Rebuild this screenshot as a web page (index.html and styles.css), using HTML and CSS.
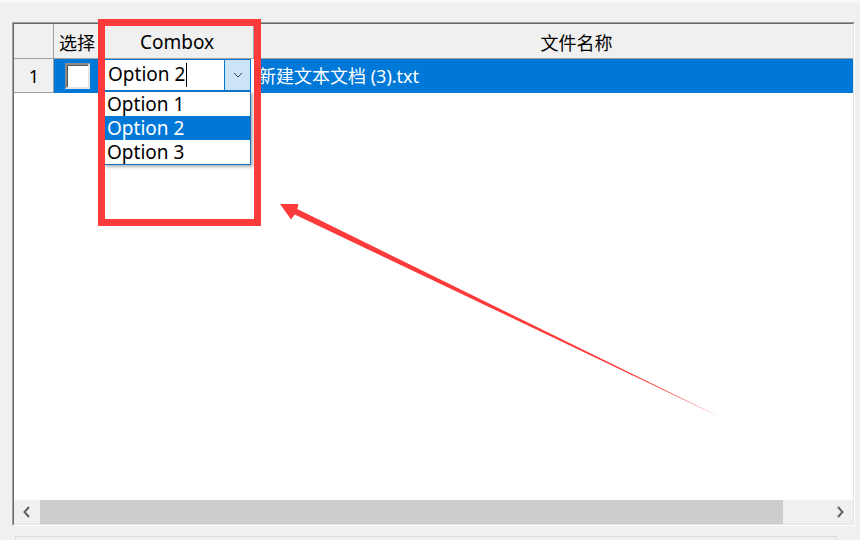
FILE: index.html
```html
<!DOCTYPE html>
<html>
<head>
<meta charset="utf-8">
<link rel="stylesheet" href="styles.css">
</head>
<body>
<div class="topstrip"></div>
<div class="grid">
  <div class="grid-inner">
    <div class="header">
      <div class="cell rowhead corner"></div>
      <div class="cell col-check hcell">选择</div>
      <div class="cell col-combo hcell latin">Combox</div>
      <div class="cell col-name hcell">文件名称</div>
    </div>
    <div class="row selected">
      <div class="cell rowhead">1</div>
      <div class="cell col-check"><span class="checkbox"></span></div>
      <div class="cell col-combo edit">
        <div class="combo">
          <div class="combo-text latin">Option 2<span class="caret"></span></div>
          <div class="combo-btn">
            <svg width="10" height="6" viewBox="0 0 10 6"><path d="M1 1 L5 5 L9 1" fill="none" stroke="#404040" stroke-width="1"/></svg>
          </div>
          <ul class="dropdown latin">
            <li>Option 1</li>
            <li class="hl">Option 2</li>
            <li>Option 3</li>
          </ul>
        </div>
      </div>
      <div class="cell col-name name">新建文本文档 (3).txt</div>
    </div>
    <div class="body-fill"></div>
    <div class="hscroll">
      <div class="sbtn">
        <svg width="10" height="12" viewBox="0 0 10 12"><path d="M7 1 L2.5 6 L7 11" fill="none" stroke="#606060" stroke-width="2"/></svg>
      </div>
      <div class="thumb"></div>
      <div class="track"></div>
      <div class="sbtn">
        <svg width="10" height="12" viewBox="0 0 10 12"><path d="M3 1 L7.5 6 L3 11" fill="none" stroke="#606060" stroke-width="2"/></svg>
      </div>
    </div>
  </div>
</div>
<div class="bottombox"></div>

<div class="highlight-rect"></div>
<svg class="arrow" width="860" height="540" viewBox="0 0 860 540">
  <polygon points="280,204 298.5,204 297.3,209.1 722,418 294.7,214.5 291,219.5" fill="#fe3b3b"/>
</svg>
</body>
</html>
```

FILE: styles.css
```css
html, body {
  margin: 0;
  padding: 0;
}
body {
  width: 860px;
  height: 540px;
  overflow: hidden;
  background: #f0f0f0;
  font-family: "Noto Sans", "Noto Sans CJK SC", sans-serif;
  font-size: 18px;
  color: #000;
  position: relative;
}
.latin {
  font-size: 19px;
}
.topstrip {
  height: 3px;
  background: #f9f9f9;
}
.grid {
  margin: 19px 0 0 12px;
  width: 843px;
  height: 504px;
  box-sizing: border-box;
  border-top: 1px solid #a0a0a0;
  border-left: 1px solid #a0a0a0;
  border-right: 1px solid #ffffff;
  border-bottom: 1px solid #ffffff;
}
.grid-inner {
  height: 100%;
  box-sizing: border-box;
  border-top: 1px solid #696969;
  border-left: 1px solid #696969;
  border-right: 1px solid #e3e3e3;
  border-bottom: 1px solid #e3e3e3;
  background: #ffffff;
  display: flex;
  flex-direction: column;
  overflow: hidden;
}
.header {
  display: flex;
  height: 35px;
  flex: none;
  background: #f0f0f0;
  border-bottom: 1px solid #a0a0a0;
  box-sizing: border-box;
}
.cell {
  flex: none;
  box-sizing: border-box;
  display: flex;
  align-items: center;
  white-space: nowrap;
  overflow: hidden;
}
.hcell {
  justify-content: center;
  border-right: 1px solid #a0a0a0;
  padding-top: 1px;
}
.rowhead {
  width: 40px;
  border-right: 1px solid #a0a0a0;
  background: #f0f0f0;
  justify-content: center;
}
.col-check {
  width: 47px;
  justify-content: center;
}
.col-combo {
  width: 153px;
}
.col-name {
  width: 646px;
}
.row {
  display: flex;
  height: 34px;
  flex: none;
}
.row .rowhead {
  border-bottom: 1px solid #a0a0a0;
  padding-top: 1px;
  padding-left: 1px;
}
.row.selected .col-check,
.row.selected .col-name {
  background: #0078d7;
  color: #ffffff;
}
.edit {
  background: #ffffff;
  align-items: flex-start;
  padding-left: 3px;
  overflow: visible;
}
.name {
  padding-left: 4px;
  padding-bottom: 2px;
  align-items: center;
}
.checkbox {
  display: block;
  width: 25px;
  height: 26px;
  box-sizing: border-box;
  background: #ffffff;
  border-top: 2px solid #8a8a8a;
  border-left: 2px solid #8a8a8a;
  border-right: 2px solid #e3e3e3;
  border-bottom: 2px solid #e3e3e3;
  box-shadow: inset 1px 1px 0 #5a5a5a;
  margin-top: -1px;
}
.combo {
  position: relative;
  width: 147px;
  height: 32px;
  box-sizing: border-box;
  border: 1px solid #0078d7;
  background: #ffffff;
  display: flex;
}
.combo-text {
  flex: 1;
  display: flex;
  align-items: center;
  padding-left: 3px;
  padding-bottom: 2px;
  color: #000;
}
.caret {
  display: inline-block;
  width: 0;
  height: 24px;
  border-left: 1px solid #000;
  margin-left: 1px;
  margin-top: 2px;
}
.combo-btn {
  width: 25px;
  flex: none;
  background: #cce4f7;
  border-left: 1px solid #0078d7;
  display: flex;
  align-items: center;
  justify-content: center;
}
.dropdown {
  position: absolute;
  left: -1px;
  top: 31px;
  width: 147px;
  margin: 0;
  padding: 0;
  list-style: none;
  box-sizing: border-box;
  border: 1px solid #1c6fb9;
  background: #ffffff;
  box-shadow: 2px 2px 3px rgba(0, 0, 0, 0.3);
}
.dropdown li {
  height: 24px;
  line-height: 25px;
  padding-left: 2px;
  color: #000;
}
.dropdown li.hl {
  background: #0078d7;
  color: #ffffff;
}
.body-fill {
  flex: 1;
  background: #ffffff;
}
.hscroll {
  height: 24px;
  flex: none;
  display: flex;
  background: #f0f0f0;
}
.sbtn {
  width: 26px;
  flex: none;
  display: flex;
  align-items: center;
  justify-content: center;
}
.thumb {
  width: 743px;
  flex: none;
  background: #cdcdcd;
}
.track {
  flex: 1;
}
.bottombox {
  margin: 10px 0 0 15px;
  width: 822px;
  height: 20px;
  box-sizing: border-box;
  border: 1px solid #dcdcdc;
  background: #f0f0f0;
}
.highlight-rect {
  position: absolute;
  left: 98px;
  top: 19px;
  width: 163px;
  height: 207px;
  box-sizing: border-box;
  border: 7px solid #fe3b3b;
}
.arrow {
  position: absolute;
  left: 0;
  top: 0;
  pointer-events: none;
}
```
